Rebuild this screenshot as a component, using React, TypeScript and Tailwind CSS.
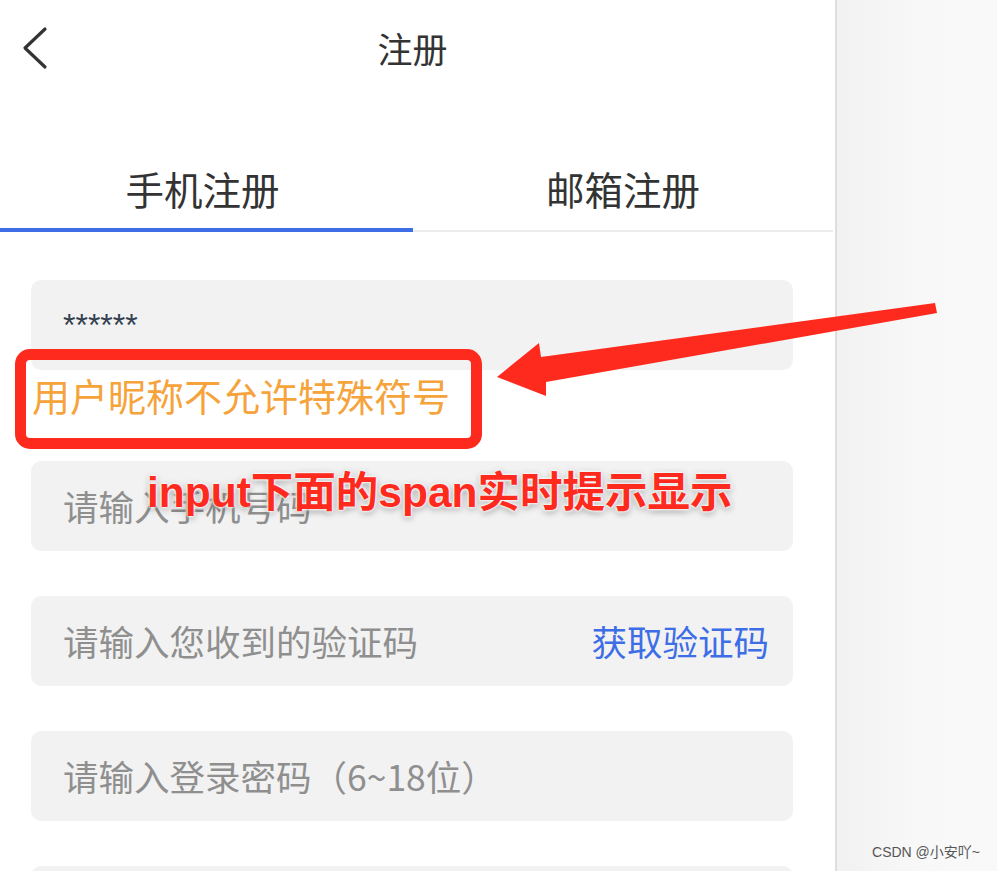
import React from "react";

const cjk = "font-['PingFang_SC','Noto_Sans_CJK_SC',sans-serif]";

const Field = ({
  placeholder,
  value,
  action,
}: {
  placeholder?: string;
  value?: string;
  action?: string;
}) => (
  <div className="ml-[31px] flex h-[90px] w-[762px] shrink-0 items-center justify-between rounded-[10px] bg-[#f2f2f2] pl-[32px] pr-[24px]">
    {value ? (
      <span className="font-['Liberation_Sans',sans-serif] text-[32px] leading-none text-[#34404f]">
        {value}
      </span>
    ) : (
      <span className={`${cjk} text-[35.5px] leading-none text-[#8f8f8f]`}>
        {placeholder}
      </span>
    )}
    {action && (
      <span className={`${cjk} text-[35.5px] leading-none text-[#3d6ee6]`}>
        {action}
      </span>
    )}
  </div>
);

const App = () => {
  return (
    <div className="relative flex h-[871px] w-[997px] overflow-hidden bg-white">
      {/* phone screen */}
      <div className="w-[835px] shrink-0 bg-white">
        {/* header */}
        <div className="relative flex h-[94px] items-center justify-center">
          <svg
            className="absolute left-[18px] top-[24px]"
            width="34"
            height="48"
            viewBox="0 0 34 48"
            fill="none"
          >
            <path
              d="M27 5 L7 24 L27 43"
              stroke="#333"
              strokeWidth="3.2"
              strokeLinecap="round"
              strokeLinejoin="round"
            />
          </svg>
          <span className={`${cjk} mr-[10px] text-[35px] text-[#333] leading-none`}>注册</span>
        </div>

        {/* tabs */}
        <div className="mt-[56px] flex">
          <div className="flex w-[413px] flex-col">
            <div className={`${cjk} flex h-[78px] items-center justify-center pr-[8px] text-[38.5px] text-[#333]`}>
              手机注册
            </div>
            <div className="h-[4px] bg-[#3d6ee6]" />
          </div>
          <div className="flex w-[420px] flex-col">
            <div className={`${cjk} flex h-[78px] items-center justify-center text-[38.5px] text-[#333]`}>
              邮箱注册
            </div>
            <div className="flex h-[4px] flex-col justify-end">
              <div className="h-[2px] bg-[#ececec]" />
            </div>
          </div>
        </div>

        {/* form */}
        <div className="mt-[48px] flex flex-col">
          <Field value="******" />
          <div className={`${cjk} ml-[32px] mb-[41px] h-[50px] shrink-0 text-[38px] leading-[50px] text-[#f5a33a]`}>
            用户昵称不允许特殊符号
          </div>
          <Field placeholder="请输入手机号码" />
          <div className="h-[45px] shrink-0" />
          <Field placeholder="请输入您收到的验证码" action="获取验证码" />
          <div className="h-[45px] shrink-0" />
          <Field placeholder="请输入登录密码（6~18位）" />
          <div className="h-[45px] shrink-0" />
          <Field placeholder="" />
        </div>
      </div>

      {/* right side */}
      <div className="flex-1 border-l-2 border-[#dedede] bg-gradient-to-r from-[#f1f1f1] via-[#f8f8f8] to-[#f9f9f9]" />

      {/* annotation: red box */}
      <div className="pointer-events-none absolute left-[15px] top-[349px] h-[100px] w-[467px] rounded-[15px] border-[11px] border-[#ff2a1e]" />

      {/* annotation: arrow */}
      <svg
        className="pointer-events-none absolute left-0 top-0"
        width="997"
        height="871"
        viewBox="0 0 997 871"
      >
        <polygon
          points="497,377 539,343 541,357 935,303 937,313 546,382 546,396"
          fill="#ff2a1e"
        />
      </svg>

      {/* annotation: caption */}
      <div className="pointer-events-none absolute left-[147px] top-[467px] font-['Liberation_Sans','Noto_Sans_CJK_SC',sans-serif] text-[42.5px] font-bold leading-[52px] text-[#ff2a1e] [text-shadow:0_0_2px_#fff,0_0_3px_#fff,0_0_4px_#fff,0_2px_7px_rgba(0,0,0,0.45)]">
        input下面的span实时提示显示
      </div>

      {/* watermark */}
      <div className="pointer-events-none absolute right-[17px] bottom-[8px] font-['Liberation_Sans','Noto_Sans_CJK_SC',sans-serif] text-[14px] text-[#555]">
        CSDN @小安吖~
      </div>
    </div>
  );
};

export default App;
